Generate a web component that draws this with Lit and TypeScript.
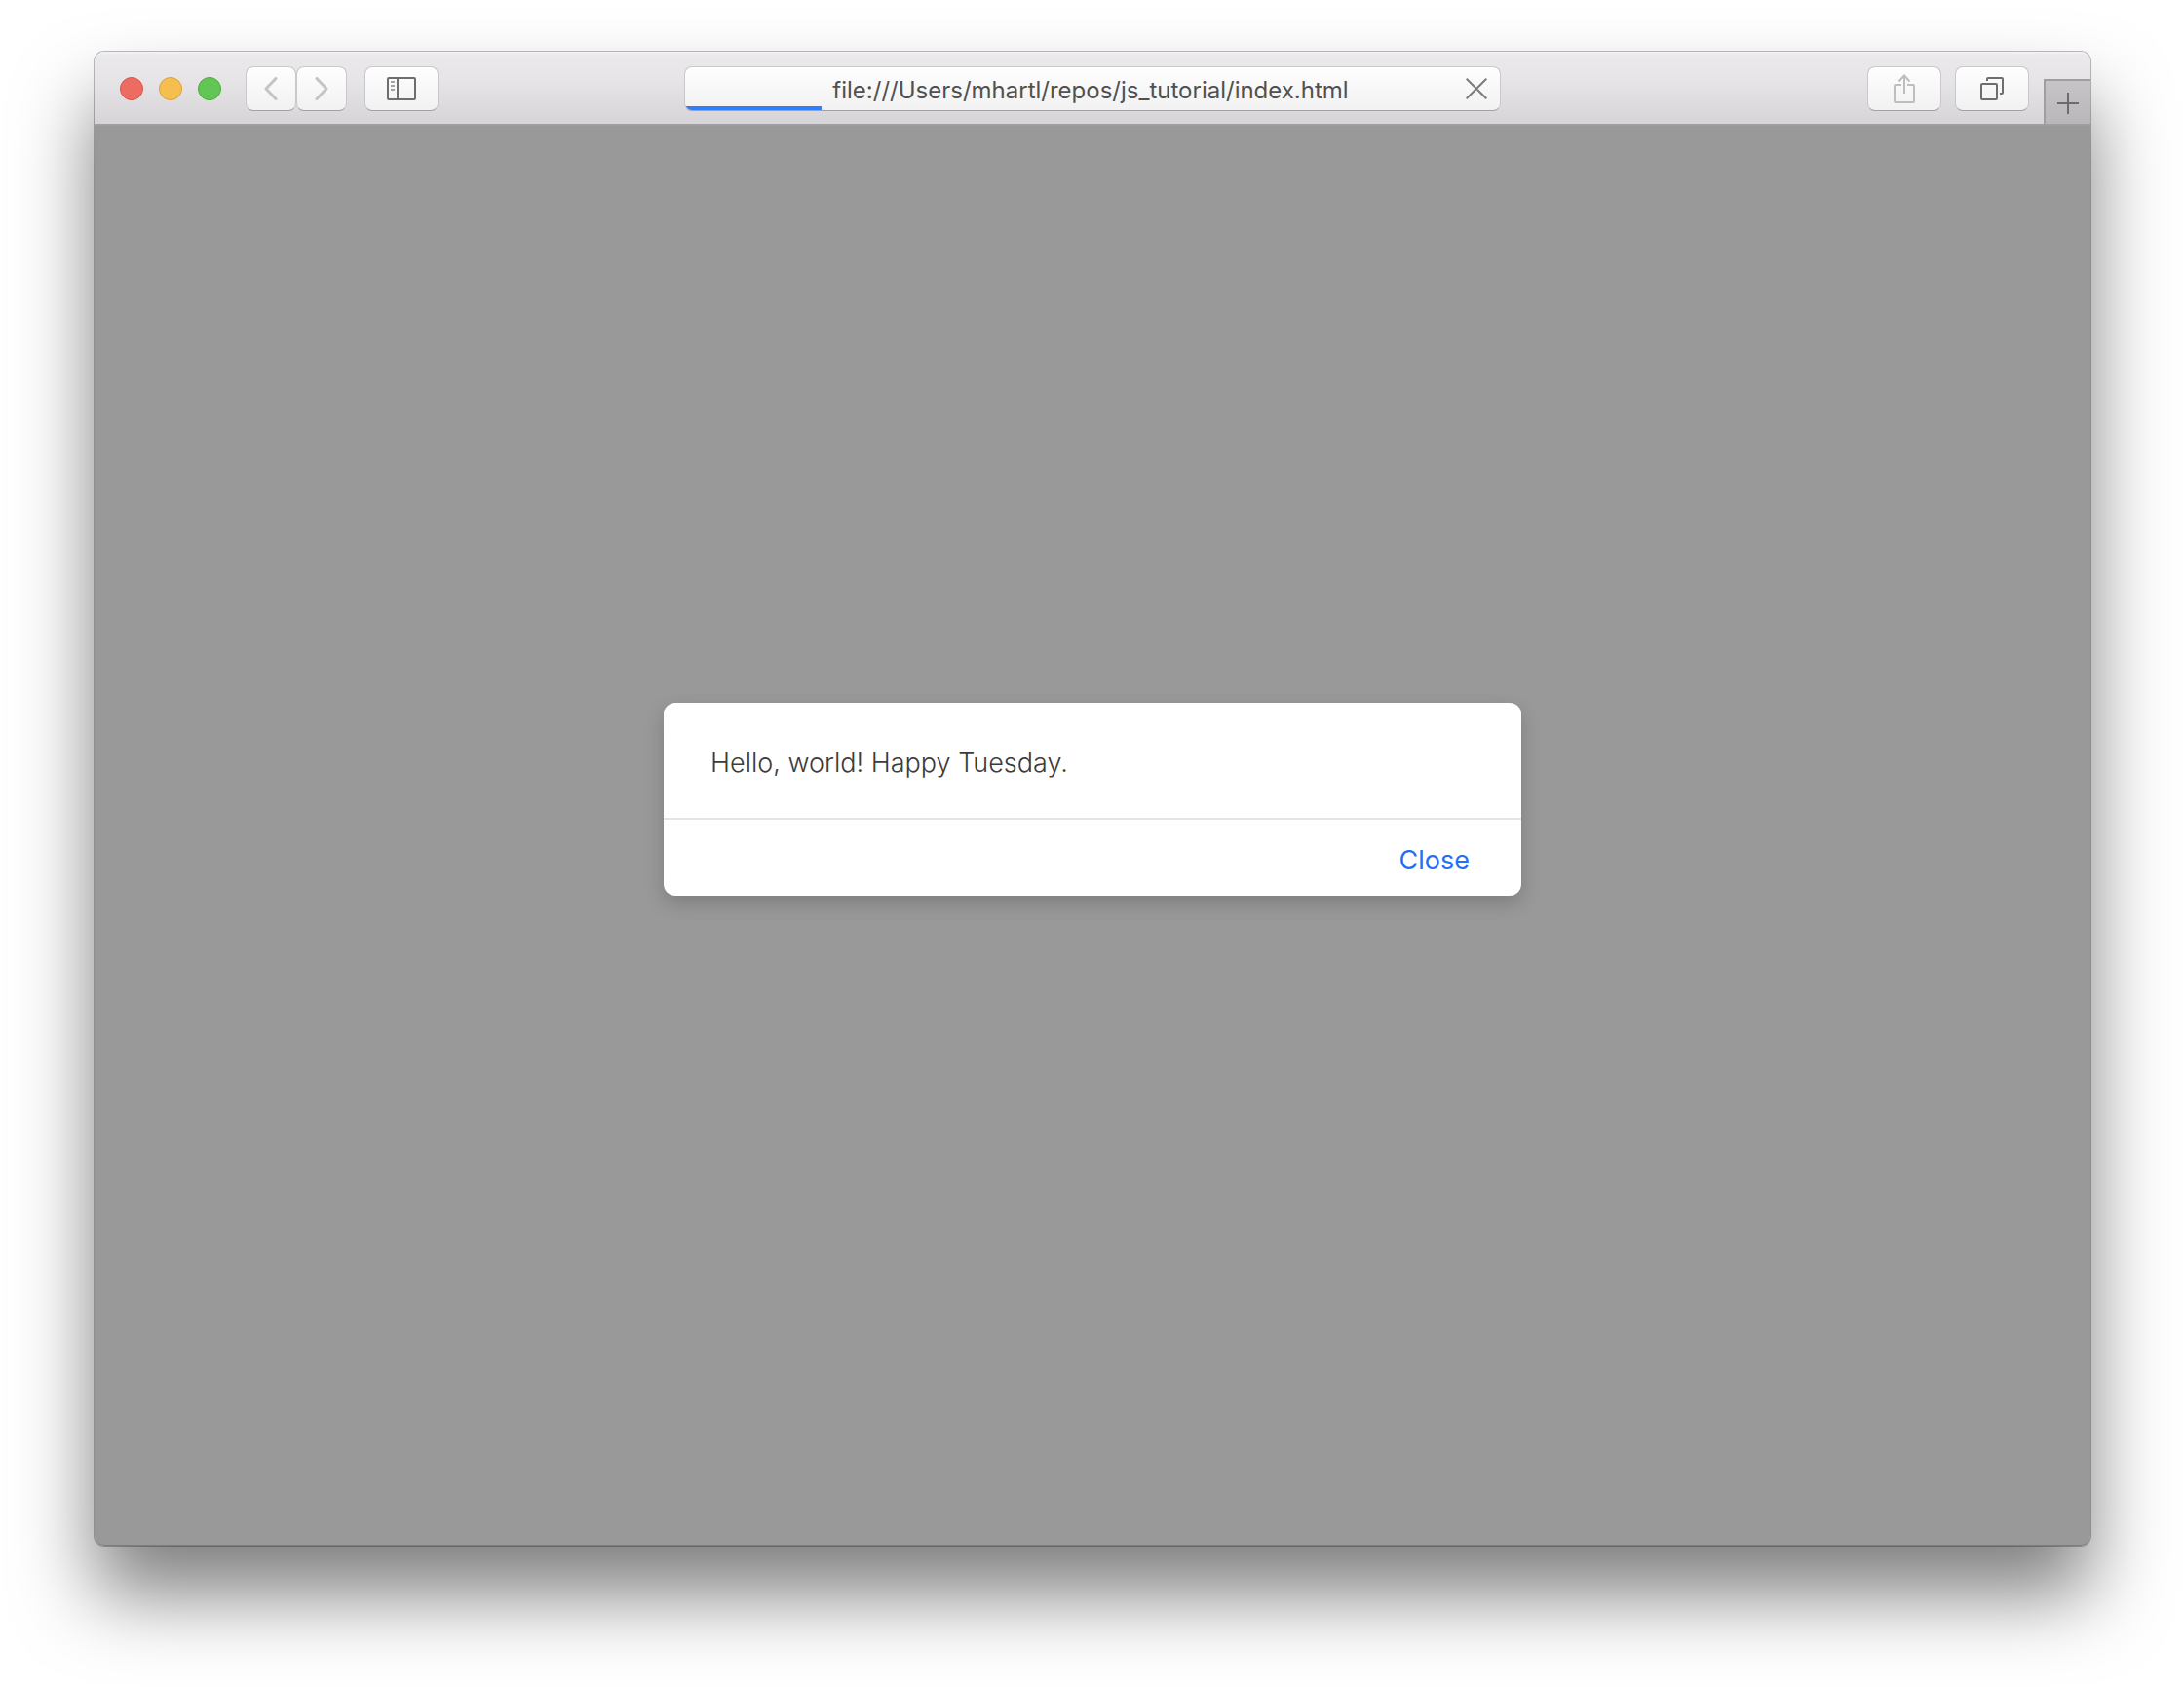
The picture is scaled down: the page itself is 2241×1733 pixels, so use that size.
import { LitElement, html, svg, css } from "lit";
import { customElement, property, state } from "lit/decorators.js";

const icons = {
  back: svg`<svg width="14" height="24" viewBox="0 0 14 24" fill="none" stroke="#c4c4c4" stroke-width="3" stroke-linecap="round" stroke-linejoin="round"><path d="M12 1.5 2 12l10 10.500"/></svg>`,
  forward: svg`<svg width="14" height="24" viewBox="0 0 14 24" fill="none" stroke="#c4c4c4" stroke-width="3" stroke-linecap="round" stroke-linejoin="round"><path d="M2 1.5 12 12 2 22.500"/></svg>`,
  sidebar: svg`<svg width="30" height="24" viewBox="0 0 30 24" fill="none" stroke="#6e6e6e" stroke-width="2"><rect x="1" y="1" width="28" height="22" rx="1"/><path d="M11 1v22"/><path stroke="#a2a2a2" d="M4 5h4M4 9h4M4 13h4"/></svg>`,
  stop: svg`<svg width="22" height="22" viewBox="0 0 22 22" fill="none" stroke="#7b7b7b" stroke-width="2"><path d="M.7.7l20.600 20.600M21.300.7.7 21.300"/></svg>`,
  share: svg`<svg width="22" height="30" viewBox="0 0 22 30" fill="none" stroke="#bebebe" stroke-width="2"><path d="M8 11H2a1 1 0 0 0-1 1v16a1 1 0 0 0 1 1h18a1 1 0 0 0 1-1V12a1 1 0 0 0-1-1h-6M11 20V1.500M5.500 7.500 11 1.500l5.500 6"/></svg>`,
  tabs: svg`<svg width="24" height="24" viewBox="0 0 24 24" fill="none" stroke="#6e6e6e" stroke-width="2"><rect x="1" y="7" width="16" height="16" rx="1"/><path d="M7 4V2a1 1 0 0 1 1-1h14a1 1 0 0 1 1 1v14a1 1 0 0 1-1 1h-2"/></svg>`,
  plus: svg`<svg width="22" height="22" viewBox="0 0 22 22" fill="none" stroke="#6b6a6c" stroke-width="2"><path d="M11 0v22M0 11h22"/></svg>`,
};

@customElement("browser-toolbar")
class BrowserToolbar extends LitElement {
  @property() url = "";
  @property({ type: Number }) progress = 0;

  static styles = css`
    :host {
      display: grid;
      grid-template-columns: minmax(0, 1fr) minmax(0, 838px) minmax(0, 1fr);
      box-sizing: border-box;
      height: 76px;
      background: linear-gradient(#f5f4f5 0, #ebe9ec 3px, #e6e4e7 30px, #d6d4d7 74px);
      border-bottom: 2px solid #9f9ea1;
    }
    button {
      box-sizing: border-box;
      margin: 0;
      padding: 0;
      border: 0;
      background: none;
      display: flex;
      align-items: center;
      justify-content: center;
    }
    .left,
    .right {
      display: flex;
      align-items: flex-start;
    }
    .right {
      justify-content: flex-end;
    }
    .lights {
      display: flex;
      gap: 16px;
      padding: 26px 25px 0 26px;
    }
    .light {
      width: 24px;
      height: 24px;
      border-radius: 50%;
    }
    .red {
      background: #ed6b60;
      border: 1px solid #d9534a;
    }
    .yellow {
      background: #f5bf50;
      border: 1px solid #dba03c;
    }
    .green {
      background: #61c654;
      border: 1px solid #4cab3b;
    }
    .key,
    .address {
      height: 46px;
      margin-top: 15px;
      border: 1px solid #c9c8ca;
      border-bottom-color: #a3a2a4;
      border-radius: 8px;
      background: linear-gradient(#fefefe, #f1f1f1);
      box-sizing: border-box;
    }
    .key {
      width: 76px;
      flex: none;
    }
    .arrow {
      width: 52px;
    }
    .gap {
      margin-left: 18px;
    }
    .tabs {
      margin-left: 14px;
      margin-right: 15px;
    }
    .address {
      position: relative;
      display: flex;
      align-items: center;
      overflow: hidden;
    }
    .url {
      flex: 1;
      min-width: 0;
      height: 44px;
      box-sizing: border-box;
      padding: 2px 0 0 44px;
      border: 0;
      background: none;
      outline: none;
      text-align: center;
      color: #505050;
      font: 24px/32px Inter, "Liberation Sans", sans-serif;
    }
    .stop {
      width: 48px;
      height: 44px;
    }
    .bar {
      position: absolute;
      left: 0;
      bottom: 0;
      height: 4px;
      background: #327cf6;
    }
    .new-tab {
      align-self: flex-end;
      width: 48px;
      height: 46px;
      border: solid #a09ea2;
      border-width: 2px 0 0 2px;
      background: linear-gradient(#c6c4c7, #b9b7ba);
      padding-top: 2px;
    }
  `;

  render() {
    return html`
      <div class="left">
        <div class="lights">
          <button class="light red" aria-label="Close window"></button>
          <button class="light yellow" aria-label="Minimize window"></button>
          <button class="light green" aria-label="Zoom window"></button>
        </div>
        <button class="key arrow" aria-label="Back">${icons.back}</button>
        <button class="key arrow" aria-label="Forward">${icons.forward}</button>
        <button class="key gap" aria-label="Show sidebar">${icons.sidebar}</button>
      </div>
      <div class="address">
        <input class="url" type="text" aria-label="Address" .value=${this.url} />
        <button class="stop" aria-label="Stop loading">${icons.stop}</button>
        <div class="bar" style="width:${this.progress}%"></div>
      </div>
      <div class="right">
        <button class="key" aria-label="Share">${icons.share}</button>
        <button class="key tabs" aria-label="Show all tabs">${icons.tabs}</button>
        <button class="new-tab" aria-label="New tab">${icons.plus}</button>
      </div>
    `;
  }
}

@customElement("alert-dialog")
class AlertDialog extends LitElement {
  @property() message = "";

  static styles = css`
    :host {
      display: block;
      width: 880px;
      max-width: 90%;
      border-radius: 12px;
      background: #fff;
      box-shadow: 0 8px 20px rgba(0, 0, 0, 0.18);
      font: 27px/36px Inter, "Liberation Sans", sans-serif;
    }
    .message {
      margin: 0;
      padding: 44px 48px 38px;
      border-bottom: 2px solid #e5e5e5;
      color: #3c3c3c;
      font-weight: 300;
    }
    .actions {
      display: flex;
      justify-content: flex-end;
      padding: 24px 53px 18px;
    }
    .close {
      margin: 0;
      padding: 0;
      border: 0;
      background: none;
      color: #246df6;
      font: inherit;
    }
  `;

  private close() {
    this.dispatchEvent(new CustomEvent("dismiss"));
  }

  render() {
    return html`
      <p class="message">${this.message}</p>
      <div class="actions">
        <button class="close" @click=${this.close}>Close</button>
      </div>
    `;
  }
}

@customElement("app-root")
class AppRoot extends LitElement {
  @state() private open = true;

  static styles = css`
    :host {
      display: flex;
      box-sizing: border-box;
      min-height: 100vh;
      padding: 53px 96px 147px 97px;
      background: #fff;
      overflow: hidden;
    }
    .window {
      position: relative;
      flex: 1;
      min-width: 0;
      display: flex;
      flex-direction: column;
      border-radius: 10px;
      box-shadow: 0 0 0 1px rgba(0, 0, 0, 0.26), 0 50px 80px rgba(0, 0, 0, 0.5);
    }
    .toolbar {
      border-radius: 10px 10px 0 0;
      overflow: hidden;
    }
    .page {
      flex: 1;
      box-sizing: border-box;
      background: #999;
      border-bottom: 1px solid #7c7c7c;
      border-radius: 0 0 10px 10px;
    }
    .overlay {
      position: absolute;
      inset: 0;
      display: flex;
      align-items: center;
      justify-content: center;
      pointer-events: none;
    }
    .dialog {
      pointer-events: auto;
    }
  `;

  render() {
    return html`
      <div class="window">
        <browser-toolbar
          class="toolbar"
          url="file:///Users/mhartl/repos/js_tutorial/index.html"
          progress="16.8"
        ></browser-toolbar>
        <main class="page"></main>
        ${this.open
          ? html`<div class="overlay">
              <alert-dialog
                class="dialog"
                role="dialog"
                aria-label="Page alert"
                message="Hello, world! Happy Tuesday."
                @dismiss=${() => (this.open = false)}
              ></alert-dialog>
            </div>`
          : null}
      </div>
    `;
  }
}
